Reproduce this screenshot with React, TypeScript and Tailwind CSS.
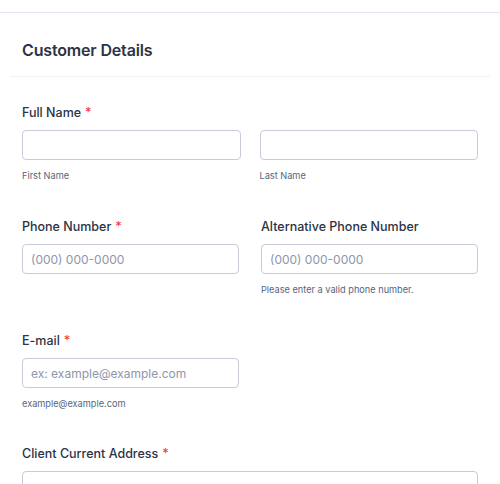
import React from "react";

function Label({ text, required }: { text: string; required?: boolean }) {
  return (
    <div className="text-[12.5px] font-medium text-[#2c3345] leading-[20px] h-[20px] pt-[1px] box-content mb-[-1px]">
      {text}
      {required && <span className="text-[#f23a3c] ml-[4px]">*</span>}
    </div>
  );
}

function Input({ placeholder }: { placeholder?: string }) {
  return (
    <input
      className="w-full h-[30px] rounded-[4px] border border-[#c8cbd9] bg-white px-[8px] text-[12px] text-[#2c3345] placeholder:text-[#8f95ab] outline-none"
      placeholder={placeholder}
      readOnly
    />
  );
}

function Sub({ text }: { text: string }) {
  return <div className="mt-[9px] mb-[-1px] text-[9.2px] leading-[14px] text-[#57647e]">{text}</div>;
}

export default function App() {
  return (
    <div className="w-[500px] h-[484px] overflow-hidden bg-white" style={{ fontFamily: "Inter, 'Noto Sans', sans-serif" }}>
      <div className="h-[12px]" />
      <div className="border-t border-[#e3e5ee]" />
      <div className="px-[22px] pt-[26px] pb-[15px]">
        <h2 className="text-[16px] tracking-[-0.01em] font-semibold text-[#2c3345] leading-[22px]">Customer Details</h2>
      </div>
      <div className="mx-[10px] border-t border-[#f0f1f6]" />
      <div className="px-[22px] pt-[25px]">
        <Label text="Full Name" required />
        <div className="grid grid-cols-2 gap-x-[19px] mt-[8px]">
          <div>
            <Input />
            <Sub text="First Name" />
          </div>
          <div>
            <Input />
            <Sub text="Last Name" />
          </div>
        </div>

        <div className="grid grid-cols-2 gap-x-[22px] mt-[34px]">
          <div>
            <Label text="Phone Number" required />
            <div className="mt-[8px]">
              <Input placeholder="(000) 000-0000" />
            </div>
          </div>
          <div>
            <Label text="Alternative Phone Number" />
            <div className="mt-[8px]">
              <Input placeholder="(000) 000-0000" />
            </div>
            <Sub text="Please enter a valid phone number." />
          </div>
        </div>

        <div className="grid grid-cols-2 gap-x-[22px] mt-[34px]">
          <div>
            <Label text="E-mail" required />
            <div className="mt-[8px]">
              <Input placeholder="ex: example@example.com" />
            </div>
            <Sub text="example@example.com" />
          </div>
        </div>

        <div className="mt-[33px]">
          <Label text="Client Current Address" required />
          <div className="mt-[8px]">
            <Input />
          </div>
        </div>
      </div>
    </div>
  );
}
